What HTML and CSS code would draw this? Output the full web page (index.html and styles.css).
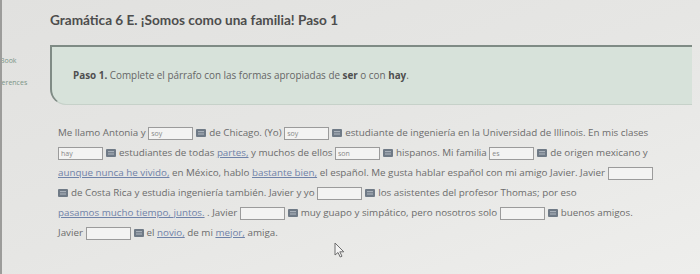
FILE: index.html
```html
<!DOCTYPE html>
<html lang="es">

<head>
  <meta charset="UTF-8">
  <meta name="viewport" content="width=device-width, initial-scale=1.0">
  <title>Gramática 6 E</title>
  <link rel="stylesheet" href="styles.css">
</head>

<body>
  <div class="side">
    <span class="side-link book">eBook</span>
    <span class="side-link refs">References</span>
  </div>

  <div class="main">
    <h1 class="title">Gramática 6 E. ¡Somos como una familia! Paso 1</h1>

    <div class="instructions">
      <p><b>Paso 1.</b> Complete el párrafo con las formas apropiadas de <b>ser</b> o con <b>hay</b>.</p>
    </div>

    <p class="story">
      Me llamo Antonia y <input class="blank" value="soy"><svg class="kb" viewBox="0 0 10 8"><rect width="10" height="8" rx="1" /><rect class="keys" x="2" y="2" width="6" height="1.2" /><rect class="keys" x="2" y="4.4" width="6" height="1.2" /></svg>de Chicago. (Yo) <input class="blank" value="soy"><svg class="kb" viewBox="0 0 10 8"><rect width="10" height="8" rx="1" /><rect class="keys" x="2" y="2" width="6" height="1.2" /><rect class="keys" x="2" y="4.4" width="6" height="1.2" /></svg>estudiante de ingeniería en la Universidad de Illinois. En mis clases<br>
      <input class="blank" value="hay"><svg class="kb" viewBox="0 0 10 8"><rect width="10" height="8" rx="1" /><rect class="keys" x="2" y="2" width="6" height="1.2" /><rect class="keys" x="2" y="4.4" width="6" height="1.2" /></svg>estudiantes de todas <a href="#">partes,</a> y muchos de ellos <input class="blank" value="son"><svg class="kb" viewBox="0 0 10 8"><rect width="10" height="8" rx="1" /><rect class="keys" x="2" y="2" width="6" height="1.2" /><rect class="keys" x="2" y="4.4" width="6" height="1.2" /></svg>hispanos. Mi familia <input class="blank" value="es"><svg class="kb" viewBox="0 0 10 8"><rect width="10" height="8" rx="1" /><rect class="keys" x="2" y="2" width="6" height="1.2" /><rect class="keys" x="2" y="4.4" width="6" height="1.2" /></svg>de origen mexicano y<br>
      <a href="#">aunque nunca he vivido,</a> en México, hablo <a href="#">bastante bien,</a> el español. Me gusta hablar español con mi amigo Javier. Javier <input class="blank" value=""><br>
      <svg class="kb" viewBox="0 0 10 8"><rect width="10" height="8" rx="1" /><rect class="keys" x="2" y="2" width="6" height="1.2" /><rect class="keys" x="2" y="4.4" width="6" height="1.2" /></svg>de Costa Rica y estudia ingeniería también. Javier y yo <input class="blank" value=""><svg class="kb" viewBox="0 0 10 8"><rect width="10" height="8" rx="1" /><rect class="keys" x="2" y="2" width="6" height="1.2" /><rect class="keys" x="2" y="4.4" width="6" height="1.2" /></svg>los asistentes del profesor Thomas; por eso<br>
      <a href="#">pasamos mucho tiempo, juntos.</a> . Javier <input class="blank" value=""><svg class="kb" viewBox="0 0 10 8"><rect width="10" height="8" rx="1" /><rect class="keys" x="2" y="2" width="6" height="1.2" /><rect class="keys" x="2" y="4.4" width="6" height="1.2" /></svg>muy guapo y simpático, pero nosotros solo <input class="blank" value=""><svg class="kb" viewBox="0 0 10 8"><rect width="10" height="8" rx="1" /><rect class="keys" x="2" y="2" width="6" height="1.2" /><rect class="keys" x="2" y="4.4" width="6" height="1.2" /></svg>buenos amigos.<br>
      Javier <input class="blank" value=""><svg class="kb" viewBox="0 0 10 8"><rect width="10" height="8" rx="1" /><rect class="keys" x="2" y="2" width="6" height="1.2" /><rect class="keys" x="2" y="4.4" width="6" height="1.2" /></svg>el <a href="#">novio,</a> de mi <a href="#">mejor,</a> amiga.
    </p>
  </div>

  <!-- mouse pointer left on the page -->
  <svg class="pointer" viewBox="0 0 12 16">
    <path d="M1 1 L1 13 L4 10.5 L6.2 15 L8 14.2 L5.8 9.8 L9.8 9.8 Z" />
  </svg>
</body>

</html>
```

FILE: styles.css
```css
body {
  margin: 0;
  height: 274px;
  overflow: hidden;
  display: flex;
  font-family: "Open Sans", "Liberation Sans", sans-serif;
  color: #6a6a6a;
  background: linear-gradient(160deg, #e1e1df 0%, #e6e6e4 50%, #eeeeec 100%);
}

.side {
  width: 48px;
  flex-shrink: 0;
  border-left: 2px solid #9c9c9a;
  padding-top: 56px;
  overflow: hidden;
}

.side-link {
  display: block;
  height: 22px;
  font-size: 7px;
  color: #7b9486;
  white-space: nowrap;
}

.book {
  margin-left: -6px;
}

.refs {
  margin-left: -11px;
}

.main {
  flex: 1;
  padding-right: 8px;
}

.title {
  margin: 11px 0 0;
  font-family: Lato, "Open Sans", sans-serif;
  font-size: 13.6px;
  font-weight: 700;
  color: #4d4d4d;
  line-height: 18px;
}

.instructions {
  margin-top: 16px;
  height: 57px;
  background: #d7e2da;
  border-top: 2px solid #7f8b85;
  border-left: 2px solid #7f8b85;
  border-bottom: 1px solid #c6d1c9;
  border-bottom-left-radius: 16px;
  padding: 0 0 0 21px;
}

.instructions p {
  margin: 21px 0 0;
  font-size: 9.9px;
  color: #666;
}

.instructions b {
  color: #4f4f4f;
}

.story {
  margin: 18px 0 0;
  padding-left: 8px;
  white-space: nowrap;
  font-size: 9.8px;
  line-height: 20px;
  color: #6c6c6c;
}

.story a {
  color: #6f82a8;
  text-decoration: underline;
}

.blank {
  box-sizing: border-box;
  width: 45px;
  height: 13px;
  margin: 0 3px 0 0;
  padding: 0 2px;
  border: 1px solid #9b9b9b;
  background: #f3f3f2;
  font-family: "Open Sans", sans-serif;
  font-size: 7px;
  color: #888;
  vertical-align: middle;
}

.kb {
  width: 10px;
  height: 8px;
  margin-right: 3px;
  vertical-align: middle;
  fill: #6f7a86;
}

.kb .keys {
  fill: #a9b1ba;
}

.pointer {
  position: absolute;
  left: 334px;
  top: 242px;
  width: 12px;
  height: 16px;
  fill: #f4f4f4;
  stroke: #6d6d6d;
  stroke-width: 1;
}
```
